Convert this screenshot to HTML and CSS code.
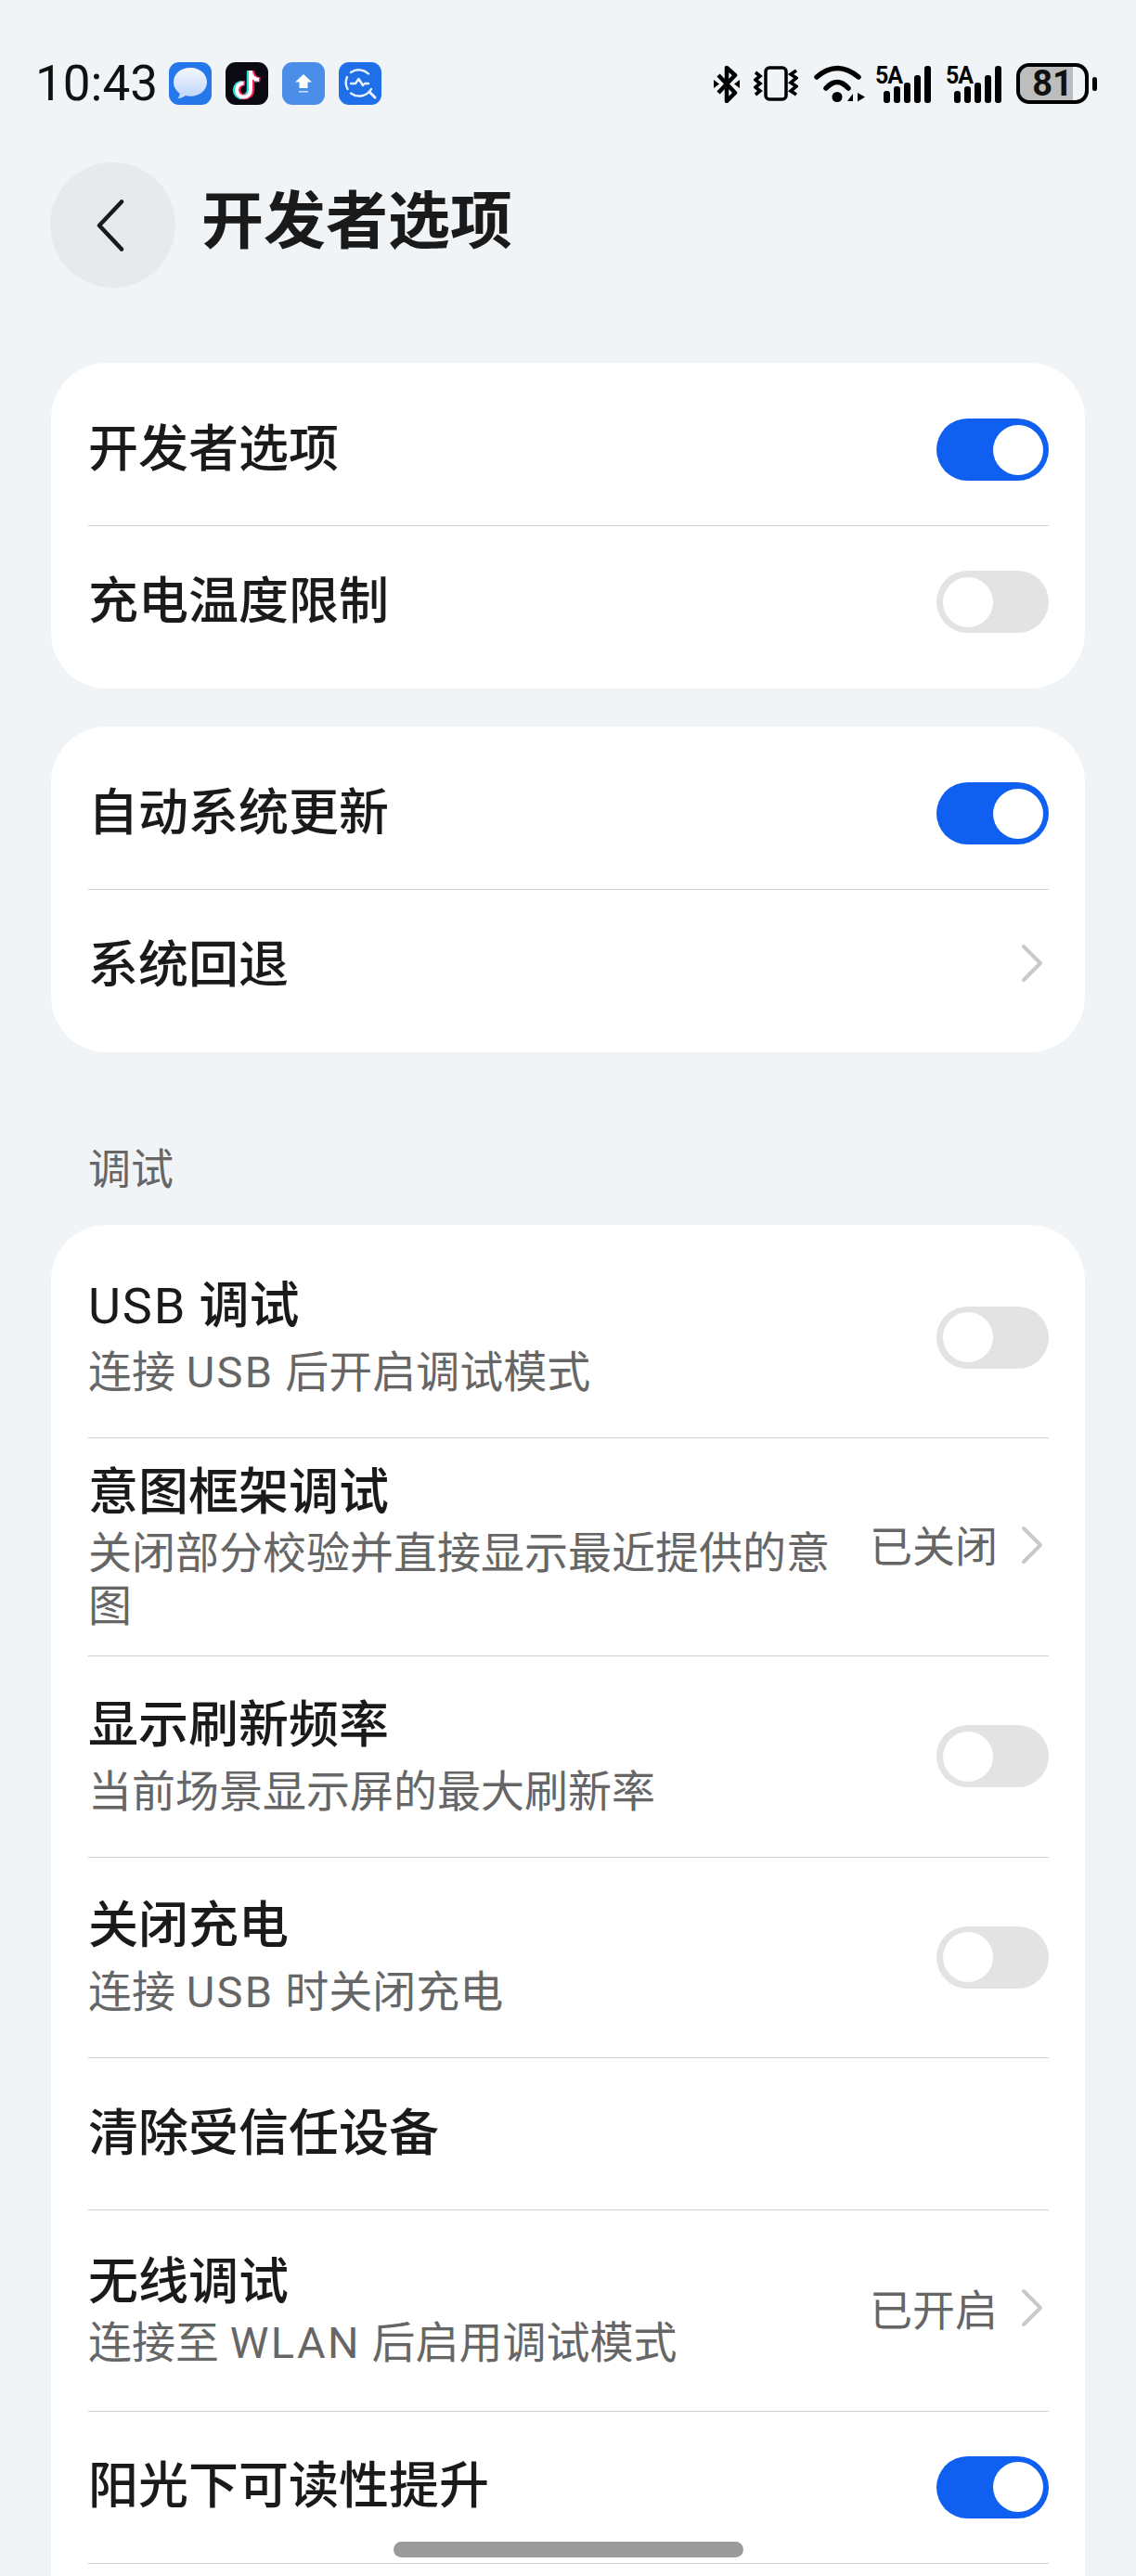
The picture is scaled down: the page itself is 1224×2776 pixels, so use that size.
FILE: index.html
```html
<!DOCTYPE html>
<html lang="zh-CN">
<head>
    <meta charset="UTF-8">
    <meta name="viewport" content="width=device-width, initial-scale=1.0">
    <title>开发者选项</title>
    <link rel="stylesheet" href="styles.css">
</head>
<body>
<div class="phone">
    <div class="status-bar">
        <div class="status-left">
            <span class="time">10:43</span>
            <div class="app-icons">
                <svg class="app-icon" viewBox="0 0 46 46">
                    <defs>
                        <linearGradient id="bubble" x1="0" y1="0" x2="0" y2="1">
                            <stop offset="0" stop-color="#f4f7fd"/>
                            <stop offset="1" stop-color="#bcd6fb"/>
                        </linearGradient>
                    </defs>
                    <rect width="46" height="46" rx="11" fill="#2678ea"/>
                    <path d="M23 6C12.5 6 5 12.8 5 21.5c0 5 2.5 9.2 6.6 12 .1 2.200-.9 4.300-2.200 5.700 3.300 0 6.200-1.300 8.300-3.100 1.700.4 3.500.6 5.300.6 10.500 0 18-6.700 18-15.200S33.500 6 23 6z" fill="url(#bubble)"/>
                </svg>
                <svg class="app-icon" viewBox="0 0 46 46">
                    <rect width="46" height="46" rx="11" fill="#0b0a12"/>
                    <g fill="none" stroke-width="5.500" stroke-linecap="butt">
                        <path d="M27 8v21a7.500 7.500 0 1 1-7.500-7.500M27 9c.6 5.500 4 8.500 9 9" stroke="#25e0e0" transform="translate(-1.500 1)"/>
                        <path d="M27 8v21a7.500 7.500 0 1 1-7.500-7.500M27 9c.6 5.500 4 8.500 9 9" stroke="#f0245c" transform="translate(1.500 1)"/>
                        <path d="M27 8v21a7.500 7.500 0 1 1-7.500-7.500M27 9c.6 5.500 4 8.500 9 9" stroke="#fff" stroke-width="4" transform="translate(0 1)"/>
                    </g>
                </svg>
                <svg class="app-icon" viewBox="0 0 46 46">
                    <rect width="46" height="46" rx="11" fill="#4a8eea"/>
                    <path d="M23 13l9 8.500h-4.500V28h-9v-6.500H14z" fill="#fff"/>
                    <rect x="18" y="31" width="10" height="1.500" fill="#cfe0fa"/>
                </svg>
                <svg class="app-icon" viewBox="0 0 46 46">
                    <rect width="46" height="46" rx="11" fill="#1f6fe8"/>
                    <g fill="none" stroke="#e8f1ff" stroke-width="2.400" stroke-linecap="round" stroke-linejoin="round">
                        <path d="M13 11a15 15 0 0 1 19 1.500M35 29a15 15 0 0 1-22 4.500M9 16a15 15 0 0 0 .5 13"/>
                        <path d="M13 23h5l3.500-5 4.500 7 2-2h4"/>
                        <path d="M33 32l6 6" stroke-width="3"/>
                    </g>
                </svg>
            </div>
        </div>
        <div class="status-right">
            <svg class="ic-bt" viewBox="0 0 28 41">
                <path d="M5 11l18 19-9 9V3l9 8L5 30" fill="none" stroke="#000" stroke-width="4.500" stroke-linejoin="round"/>
                <path d="M0 16l6 4.500L0 25zM28 16l-6 4.500 6 4.500z" fill="#000"/>
            </svg>
            <svg class="ic-vib" viewBox="0 0 48 38">
                <rect x="13" y="2" width="22" height="34" rx="4" fill="none" stroke="#000" stroke-width="3.500"/>
                <path d="M2 7l5 4-5 4 5 4-5 4 5 4-5 4M46 5l-6 4 6 4-6 5 6 4-6 5 6 4" fill="none" stroke="#000" stroke-width="3.600"/>
            </svg>
            <svg class="ic-wifi" viewBox="0 0 56 40">
                <g fill="none" stroke="#000" stroke-width="5.500" stroke-linecap="round">
                    <path d="M3 13Q25-6 48 13"/>
                    <path d="M13 25Q25 12 37 25"/>
                </g>
                <circle cx="25" cy="34.500" r="5.500" fill="#000"/>
                <path d="M36 39l6-8v8zM47 30l8 4.500-8 5z" fill="#000"/>
            </svg>
            <svg class="ic-signal" viewBox="0 -6 60 54">
                <text x="0" y="21" class="signal-text">5A</text>
                <g fill="#000">
                    <rect x="9" y="29" width="7" height="13" rx="3"/>
                    <rect x="20" y="24" width="7" height="18" rx="3"/>
                    <rect x="31" y="20" width="7" height="22" rx="3"/>
                    <rect x="42" y="12" width="7" height="30" rx="3"/>
                    <rect x="53" y="2" width="7" height="40" rx="3"/>
                </g>
            </svg>
            <svg class="ic-signal" viewBox="0 -6 60 54">
                <text x="0" y="21" class="signal-text">5A</text>
                <g fill="#000">
                    <rect x="9" y="29" width="7" height="13" rx="3"/>
                    <rect x="20" y="24" width="7" height="18" rx="3"/>
                    <rect x="31" y="20" width="7" height="22" rx="3"/>
                    <rect x="42" y="12" width="7" height="30" rx="3"/>
                    <rect x="53" y="2" width="7" height="40" rx="3"/>
                </g>
            </svg>
            <div class="battery">
                <div class="battery-body"><span class="battery-fill" style="width: 81%"></span><span class="battery-num">81</span></div>
                <span class="battery-nub"></span>
            </div>
        </div>
    </div>

    <div class="nav">
        <div class="back">
            <svg width="30" height="56" viewBox="0 0 30 56"><path d="M27 2.500L3 28l24 25.500" fill="none" stroke="#1a1a1a" stroke-width="4.500" stroke-linecap="round" stroke-linejoin="round"/></svg>
        </div>
        <h1>开发者选项</h1>
    </div>

    <div class="card">
        <div class="row">
            <div class="row-text"><div class="title">开发者选项</div></div>
            <span class="toggle on"></span>
        </div>
        <div class="row">
            <div class="row-text"><div class="title">充电温度限制</div></div>
            <span class="toggle"></span>
        </div>
    </div>

    <div class="card">
        <div class="row">
            <div class="row-text"><div class="title">自动系统更新</div></div>
            <span class="toggle on"></span>
        </div>
        <div class="row">
            <div class="row-text"><div class="title">系统回退</div></div>
            <svg class="chevron" viewBox="0 0 24 42"><path d="M3 3l18 18L3 39" fill="none" stroke="#c9c9c9" stroke-width="4" stroke-linecap="round" stroke-linejoin="round"/></svg>
        </div>
    </div>

    <div class="section-label">调试</div>

    <div class="card card-last">
        <div class="row row-two">
            <div class="row-text">
                <div class="title"><span class="latin">USB</span> 调试</div>
                <div class="sub sub-gap">连接 <span class="latin">USB</span> 后开启调试模式</div>
            </div>
            <span class="toggle"></span>
        </div>
        <div class="row row-three">
            <div class="row-text">
                <div class="title">意图框架调试</div>
                <div class="sub">关闭部分校验并直接显示最近提供的意图</div>
            </div>
            <span class="value">已关闭</span>
            <svg class="chevron" viewBox="0 0 24 42"><path d="M3 3l18 18L3 39" fill="none" stroke="#c9c9c9" stroke-width="4" stroke-linecap="round" stroke-linejoin="round"/></svg>
        </div>
        <div class="row row-two">
            <div class="row-text">
                <div class="title">显示刷新频率</div>
                <div class="sub sub-gap">当前场景显示屏的最大刷新率</div>
            </div>
            <span class="toggle"></span>
        </div>
        <div class="row row-two">
            <div class="row-text">
                <div class="title">关闭充电</div>
                <div class="sub sub-gap">连接 <span class="latin">USB</span> 时关闭充电</div>
            </div>
            <span class="toggle"></span>
        </div>
        <div class="row">
            <div class="row-text"><div class="title">清除受信任设备</div></div>
        </div>
        <div class="row row-two">
            <div class="row-text">
                <div class="title">无线调试</div>
                <div class="sub">连接至 <span class="latin">WLAN</span> 后启用调试模式</div>
            </div>
            <span class="value">已开启</span>
            <svg class="chevron" viewBox="0 0 24 42"><path d="M3 3l18 18L3 39" fill="none" stroke="#c9c9c9" stroke-width="4" stroke-linecap="round" stroke-linejoin="round"/></svg>
        </div>
        <div class="row">
            <div class="row-text"><div class="title">阳光下可读性提升</div></div>
            <span class="toggle on"></span>
        </div>
    </div>

    <div class="home-bar"></div>
</div>
</body>
</html>
```

FILE: styles.css
```css
html, body {
    margin: 0;
    padding: 0;
}
body {
    background: #f1f4f7;
    font-family: Roboto, "Noto Sans CJK SC", sans-serif;
    color: #1a1a1a;
}
.phone {
    position: relative;
    height: 2776px;
    overflow: hidden;
    padding: 0 55px;
    box-sizing: border-box;
}

/* status bar */
.status-bar {
    height: 170px;
    padding-top: 5px;
    margin: 0 -55px;
    padding-left: 38px;
    padding-right: 42px;
    display: flex;
    align-items: center;
    justify-content: space-between;
}
.status-left {
    display: flex;
    align-items: center;
}
.time {
    font-size: 53px;
    color: #111;
    width: 144px;
}
.app-icons {
    display: flex;
    gap: 15px;
}
.app-icon {
    width: 46px;
    height: 46px;
    display: block;
}
.status-right {
    display: flex;
    align-items: center;
}
.ic-bt {
    width: 28px;
    height: 41px;
    margin-right: 15px;
}
.ic-vib {
    width: 48px;
    height: 38px;
    margin-right: 17px;
}
.ic-wifi {
    width: 56px;
    height: 40px;
    margin-right: 10px;
}
.ic-signal {
    width: 60px;
    height: 54px;
    margin-right: 16px;
}
.signal-text {
    font-family: Roboto, sans-serif;
    font-size: 25px;
    font-weight: 700;
    fill: #000;
    letter-spacing: -1px;
}
.battery {
    display: flex;
    align-items: center;
    gap: 4px;
}
.battery-body {
    position: relative;
    width: 78px;
    height: 44px;
    border: 4px solid #000;
    border-radius: 14px;
    box-sizing: border-box;
    overflow: hidden;
    display: flex;
    align-items: center;
    justify-content: center;
}
.battery-fill {
    position: absolute;
    left: 0;
    top: 0;
    bottom: 0;
    background: #bdbdbd;
}
.battery-num {
    position: relative;
    font-size: 38px;
    font-weight: 700;
    color: #111;
}
.battery-nub {
    width: 5px;
    height: 15px;
    background: #000;
    border-radius: 3px;
}

/* top nav */
.nav {
    display: flex;
    align-items: center;
    height: 135px;
    margin: 0 0 81px -1px;
}
.back {
    width: 135px;
    height: 135px;
    border-radius: 50%;
    background: #e7eaec;
    display: flex;
    align-items: center;
    justify-content: center;
    padding-right: 6px;
    box-sizing: border-box;
}
h1 {
    margin: 0 0 7px 28px;
    font-size: 67px;
    line-height: 90px;
    font-weight: 700;
    color: #1a1a1a;
}

/* cards and rows */
.card {
    background: #fff;
    border-radius: 60px;
    padding: 12px 39px 12px 40px;
    margin-bottom: 41px;
}
.card-last {
    padding-top: 13.5px;
    padding-bottom: 80px;
    margin-bottom: 0;
}
.row {
    min-height: 163px;
    display: flex;
    align-items: center;
    border-bottom: 1px solid #d0d0d0;
}
.card > .row:last-child {
    border-bottom: none;
}
.card-last > .row:last-child {
    border-bottom: 1px solid #d0d0d0;
}
.row-two {
    min-height: 215.5px;
}
.row-three {
    min-height: 234px;
}
.row-text {
    flex: 1;
    min-width: 0;
}
.title {
    font-size: 54px;
    line-height: 66px;
    font-weight: 500;
    color: #1a1a1a;
}
.title .latin {
    font-weight: 400;
    letter-spacing: 1.8px;
}
.sub {
    font-size: 47px;
    line-height: 57px;
    color: #666;
    margin-top: 3px;
}
.sub .latin {
    letter-spacing: 2.4px;
}
.sub-gap {
    margin-top: 9px;
}
.value {
    font-size: 46px;
    color: #666;
    margin: 0 25px 8px 40px;
    white-space: nowrap;
}
.chevron {
    width: 24px;
    height: 42px;
    margin: 0 6px 5px 0;
    flex: none;
}
.toggle {
    width: 121px;
    height: 67px;
    padding: 6.5px;
    box-sizing: border-box;
    border-radius: 34px;
    background: #e3e3e3;
    display: flex;
    justify-content: flex-start;
    flex: none;
}
.toggle.on {
    background: #0f5ff0;
    justify-content: flex-end;
}
.toggle::after {
    content: "";
    width: 54px;
    height: 54px;
    border-radius: 50%;
    background: #fff;
}

.section-label {
    font-size: 46px;
    line-height: 60px;
    color: #666;
    margin: 96px 0 30px 40px;
}

.home-bar {
    position: absolute;
    left: 424px;
    top: 2739px;
    width: 377px;
    height: 17px;
    border-radius: 9px;
    background: #9a9a9a;
}
```
